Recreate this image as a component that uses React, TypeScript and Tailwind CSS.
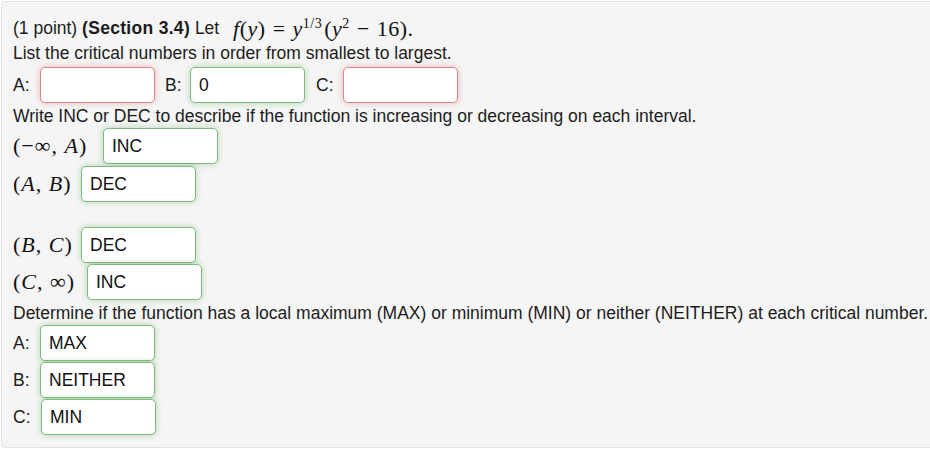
import React from 'react';

const serif = { fontFamily: '"Liberation Serif", "DejaVu Serif", serif' };

type Status = 'ok' | 'bad';

const AnswerBox: React.FC<{ value: string; status: Status }> = ({ value, status }) => (
  <div
    className={
      'h-[36px] w-[115px] shrink-0 rounded-[5px] border bg-white px-[8px] flex items-center text-[17.5px] text-[#111] ' +
      (status === 'ok'
        ? 'border-[#7dbb7d] shadow-[0_0_6px_rgba(92,170,92,0.45)]'
        : 'border-[#e08585] shadow-[0_0_6px_rgba(220,90,90,0.4)]')
    }
  >
    {value}
  </div>
);

const V: React.FC<{ children: React.ReactNode }> = ({ children }) => <i className="italic">{children}</i>;

// interval label, fixed width so the boxes line up with the original
const Interval: React.FC<{ w: string; children: React.ReactNode }> = ({ w, children }) => (
  <span className={'text-[22px] leading-none tracking-[1px] text-[#111] whitespace-nowrap ' + w} style={serif}>
    {children}
  </span>
);

export default function App() {
  return (
    <div className="min-h-screen w-full overflow-hidden bg-white pt-px pl-px">
      <div
        className="w-[960px] h-[447px] rounded-[4px] border border-[#e3e3e3] bg-[#f5f5f5] pl-[11px] pt-[14px] text-[17.5px] text-[#1c1c1c]"
        style={{ fontFamily: '"Liberation Sans", Arial, sans-serif' }}
      >
        {/* question header */}
        <div className="h-[25px] flex items-center whitespace-nowrap">
          <span>(1 point)&nbsp;</span>
          <b className="font-bold tracking-[0.3px]">(Section 3.4)</b>
          <span>&nbsp;Let&nbsp;</span>
          <span className="ml-[9px] flex items-baseline text-[22px] leading-none tracking-[0.5px] text-[#111]" style={serif}>
            <V>f</V>(<V>y</V>)<span className="mx-[7px]">=</span><V>y</V>
            <span className="text-[14px] relative -top-[8px] mr-[2px]">1/3</span>
            (<V>y</V>
            <span className="text-[14px] relative -top-[8px]">2</span>
            <span className="mx-[7px]">−</span>16).
          </span>
        </div>
        <div className="h-[25px] flex items-center">List the critical numbers in order from smallest to largest.</div>

        <div className="mt-[1px] flex items-center">
          <span className="w-[27px]">A:</span>
          <AnswerBox value="" status="bad" />
          <span className="ml-[10px] w-[25px]">B:</span>
          <AnswerBox value="0" status="ok" />
          <span className="ml-[11px] w-[27px]">C:</span>
          <AnswerBox value="" status="bad" />
        </div>

        <div className="mt-[1px] h-[24px] flex items-center whitespace-nowrap">
          Write INC or DEC to describe if the function is increasing or decreasing on each interval.
        </div>

        <div className="flex flex-col">
          <div className="flex items-center">
            <Interval w="w-[90px]">
              (−∞, <V>A</V>)
            </Interval>
            <AnswerBox value="INC" status="ok" />
          </div>
          <div className="mt-[2px] flex items-center">
            <Interval w="w-[68px]">
              (<V>A</V>, <V>B</V>)
            </Interval>
            <AnswerBox value="DEC" status="ok" />
          </div>
          <div className="mt-[25px] flex items-center">
            <Interval w="w-[68px]">
              (<V>B</V>, <V>C</V>)
            </Interval>
            <AnswerBox value="DEC" status="ok" />
          </div>
          <div className="mt-[1px] flex items-center">
            <Interval w="w-[74px]">
              (<V>C</V>, ∞)
            </Interval>
            <AnswerBox value="INC" status="ok" />
          </div>
        </div>

        <div className="mt-[1px] h-[24px] flex items-center whitespace-nowrap">
          Determine if the function has a local maximum (MAX) or minimum (MIN) or neither (NEITHER) at each critical number.
        </div>

        <div className="flex flex-col gap-[1px]">
          <div className="flex items-center">
            <span className="w-[27px]">A:</span>
            <AnswerBox value="MAX" status="ok" />
          </div>
          <div className="flex items-center">
            <span className="w-[27px]">B:</span>
            <AnswerBox value="NEITHER" status="ok" />
          </div>
          <div className="flex items-center">
            <span className="w-[28px]">C:</span>
            <AnswerBox value="MIN" status="ok" />
          </div>
        </div>
      </div>
    </div>
  );
}
